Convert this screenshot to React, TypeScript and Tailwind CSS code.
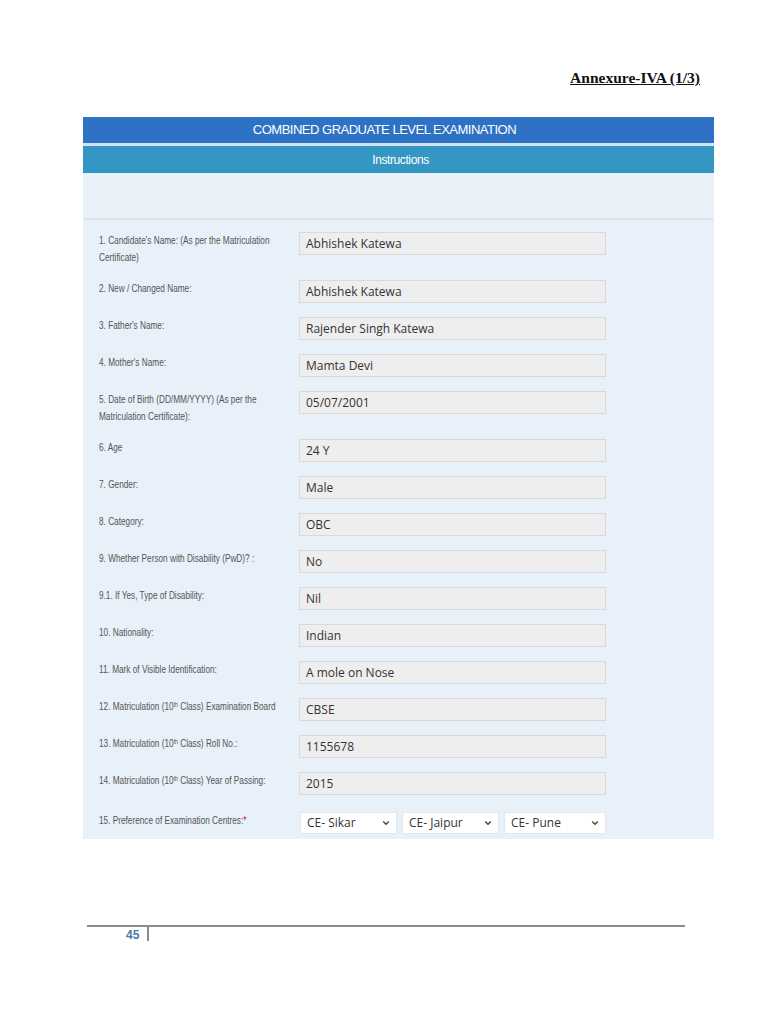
import React from "react";

const rows: { label: React.ReactNode; value: string }[] = [
  { label: "1. Candidate's Name: (As per the Matriculation Certificate)", value: "Abhishek Katewa" },
  { label: "2. New / Changed Name:", value: "Abhishek Katewa" },
  { label: "3. Father's Name:", value: "Rajender Singh Katewa" },
  { label: "4. Mother's Name:", value: "Mamta Devi" },
  { label: "5. Date of Birth (DD/MM/YYYY) (As per the Matriculation Certificate):", value: "05/07/2001" },
  { label: "6. Age", value: "24 Y" },
  { label: "7. Gender:", value: "Male" },
  { label: "8. Category:", value: "OBC" },
  { label: "9. Whether Person with Disability (PwD)? :", value: "No" },
  { label: "9.1. If Yes, Type of Disability:", value: "Nil" },
  { label: "10. Nationality:", value: "Indian" },
  { label: "11. Mark of Visible Identification:", value: "A mole on Nose" },
  {
    label: (
      <>
        12. Matriculation (10<sup className="text-[6.5px]">th</sup> Class) Examination Board
      </>
    ),
    value: "CBSE",
  },
  {
    label: (
      <>
        13. Matriculation (10<sup className="text-[6.5px]">th</sup> Class) Roll No.:
      </>
    ),
    value: "1155678",
  },
  {
    label: (
      <>
        14. Matriculation (10<sup className="text-[6.5px]">th</sup> Class) Year of Passing:
      </>
    ),
    value: "2015",
  },
];

const labelFont = { fontFamily: '"Liberation Sans", Arial, sans-serif' };
const valueFont = { fontFamily: '"Open Sans", "Noto Sans", sans-serif' };

function Label({ children }: { children: React.ReactNode }) {
  return (
    <div className="w-[200px] shrink-0">
      <div
        className="w-[230px] scale-x-[0.8] origin-left text-[10.3px] leading-[17px] text-[#555]"
        style={labelFont}
      >
        {children}
      </div>
    </div>
  );
}

function Chevron() {
  return (
    <svg width="8" height="6" viewBox="0 0 8 6" className="shrink-0">
      <polyline points="1.2,1.5 4,4.3 6.8,1.5" fill="none" stroke="#444" strokeWidth="1.4" />
    </svg>
  );
}

function Select({ text, w }: { text: string; w: string }) {
  return (
    <div
      className={`${w} h-[22px] bg-white border border-[#e3e6ea] flex items-center justify-between pl-[6px] pr-[6px] text-[12px] text-[#333]`}
      style={valueFont}
    >
      <span>{text}</span>
      <Chevron />
    </div>
  );
}

export default function App() {
  return (
    <div className="w-[768px] h-[1024px] bg-white relative overflow-hidden">
      <div className="pt-[69px] pr-[68px] flex justify-end">
        <span
          className="text-[15.5px] font-bold underline text-[#111] leading-[18px]"
          style={{ fontFamily: '"Liberation Serif", "Times New Roman", serif' }}
        >
          Annexure-IVA (1/3)
        </span>
      </div>

      <div className="ml-[83px] w-[631px] mt-[30px]">
        <div
          className="h-[26px] bg-[#2e72c5] flex items-center justify-center pr-[28px] text-white text-[13px] tracking-[-0.5px]"
          style={{ fontFamily: '"Liberation Sans", Arial, sans-serif' }}
        >
          COMBINED GRADUATE LEVEL EXAMINATION
        </div>
        <div className="h-[3px] bg-[#d3e4f4]" />
        <div
          className="h-[27px] bg-[#3496c2] flex items-center justify-center pl-[4px] text-white text-[12px] tracking-[-0.4px]"
          style={{ fontFamily: '"Liberation Sans", Arial, sans-serif' }}
        >
          Instructions
        </div>
        <div className="h-[45px] bg-[#eaf0f8]" />
        <div className="h-[2px] bg-[#dde4ec]" />
        <div className="bg-[#e8f0f9] pt-[12px] pb-[5px] pl-[16px] flex flex-col gap-[14px]">
          {rows.map((r, i) => (
            <div key={i} className="flex items-start">
              <Label>{r.label}</Label>
              <div
                className="w-[307px] h-[23px] shrink-0 bg-[#eeeeee] border border-[#d9d9d9] flex items-center pl-[6px] text-[12px] text-[#333]"
                style={valueFont}
              >
                {r.value}
              </div>
            </div>
          ))}
          <div className="flex items-start mt-[3px]">
            <Label>
              15. Preference of Examination Centres:<span className="text-[#e01010]">*</span>
            </Label>
            <div className="flex gap-[5px] ml-[1px]">
              <Select text="CE- Sikar" w="w-[97px]" />
              <Select text="CE- Jaipur" w="w-[97px]" />
              <Select text="CE- Pune" w="w-[102px]" />
            </div>
          </div>
        </div>
      </div>

      <div className="mt-[86px] ml-[87px] w-[598px] h-[2px] bg-[#8c8c8c]" />
      <div className="ml-[87px] flex items-start">
        <span
          className="ml-[39px] mt-[1px] text-[12px] font-bold text-[#4a7aa8] leading-[14px]"
          style={{ fontFamily: '"Liberation Sans", Arial, sans-serif' }}
        >
          45
        </span>
        <div className="ml-[8px] w-[2px] h-[14px] bg-[#8c8c8c]" />
      </div>
    </div>
  );
}
